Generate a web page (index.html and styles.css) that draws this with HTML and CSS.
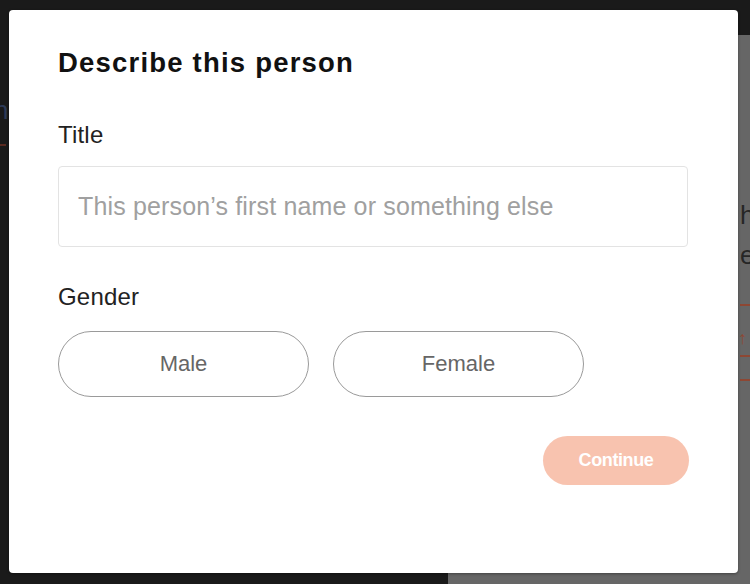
FILE: index.html
```html
<!DOCTYPE html>
<html lang="en">
<head>
<meta charset="utf-8">
<title>Describe this person</title>
<link rel="stylesheet" href="styles.css">
</head>
<body>
<div class="page">
  <div class="left-peek">
    <span class="peek-letter">n</span>
    <span class="peek-line"></span>
  </div>
  <div class="side-panel">
    <div class="side-text">
      <span>h</span>
      <span>e</span>
    </div>
    <div class="side-rule"></div>
    <div class="side-arrow">↑</div>
    <div class="side-rule"></div>
    <div class="side-rule second"></div>
  </div>
</div>

<div class="modal" role="dialog" aria-labelledby="dlg-title">
  <h2 class="modal-title" id="dlg-title">Describe this person</h2>

  <label class="field-label" for="title">Title</label>
  <input class="text-input" id="title" type="text" placeholder="This person’s first name or something else">

  <div class="field-label gender-label">Gender</div>
  <div class="choice-row">
    <button class="choice" type="button">Male</button>
    <button class="choice" type="button">Female</button>
  </div>

  <div class="actions">
    <button class="continue" type="button">Continue</button>
  </div>
</div>
</body>
</html>
```

FILE: styles.css
```css
* { box-sizing: border-box; }

html, body {
  margin: 0;
  padding: 0;
  width: 750px;
  height: 584px;
  overflow: hidden;
}

body {
  background: #1a1a1a;
  font-family: "Liberation Sans", Arial, sans-serif;
  position: relative;
}

/* dimmed page behind the dialog */
.page {
  position: absolute;
  inset: 0;
}

.left-peek {
  position: absolute;
  left: -6px;
  top: 96px;
  display: flex;
  flex-direction: column;
  gap: 20px;
}

.peek-letter {
  font-size: 26px;
  line-height: 28px;
  color: #2d3a58;
}

.peek-line {
  display: block;
  width: 12px;
  height: 2px;
  background: #5a2a20;
}

.side-panel {
  position: absolute;
  left: 448px;
  top: 35px;
  right: 0;
  bottom: 0;
  background: #666666;
  padding-left: 292px;
  padding-top: 160px;
}

.side-text {
  display: flex;
  flex-direction: column;
  font-size: 26px;
  line-height: 40px;
  color: #262626;
}

.side-rule {
  height: 2px;
  background: #8e4733;
  margin-top: 29px;
}

.side-arrow {
  color: #8e4733;
  font-size: 18px;
  line-height: 14px;
  margin-top: 25px;
  margin-left: -2px;
}

.side-arrow + .side-rule { margin-top: 10px; }
.side-rule.second { margin-top: 22px; }

/* dialog */
.modal {
  position: absolute;
  left: 9px;
  top: 10px;
  width: 729px;
  height: 563px;
  background: #ffffff;
  border-radius: 4px;
  box-shadow: 0 1px 3px rgba(0, 0, 0, 0.35);
  padding: 38px 50px 0 49px;
  display: flex;
  flex-direction: column;
  align-items: stretch;
}

.modal-title {
  margin: 0;
  font-size: 27.5px;
  line-height: 30px;
  font-weight: 700;
  letter-spacing: 1.2px;
  color: #111111;
}

.field-label {
  display: block;
  margin-top: 43px;
  font-size: 24px;
  line-height: 28px;
  letter-spacing: 0.2px;
  color: #222222;
}

.text-input {
  margin-top: 17px;
  width: 630px;
  height: 81px;
  border: 1px solid #e3e3e3;
  border-radius: 4px;
  padding: 0 19px;
  font-family: "Liberation Sans", Arial, sans-serif;
  font-size: 25px;
  letter-spacing: 0.15px;
  color: #333333;
  background: #ffffff;
  outline: none;
}

.text-input::placeholder {
  color: #a0a0a0;
  opacity: 1;
}

.gender-label {
  margin-top: 36px;
}

.choice-row {
  display: flex;
  gap: 24px;
  margin-top: 20px;
}

.choice {
  width: 251px;
  height: 66px;
  border: 1.5px solid #9a9a9a;
  border-radius: 33px;
  background: #ffffff;
  font-family: "Liberation Sans", Arial, sans-serif;
  font-size: 22px;
  color: #666666;
  padding: 0;
  cursor: pointer;
}

.actions {
  display: flex;
  justify-content: flex-end;
  margin-top: 39px;
  width: 631px;
}

.continue {
  width: 146px;
  height: 49px;
  border: none;
  border-radius: 25px;
  background: #f8c3af;
  color: #ffffff;
  font-family: "Liberation Sans", Arial, sans-serif;
  font-size: 18px;
  font-weight: 700;
  letter-spacing: -0.4px;
  padding: 0;
  cursor: pointer;
}
```
